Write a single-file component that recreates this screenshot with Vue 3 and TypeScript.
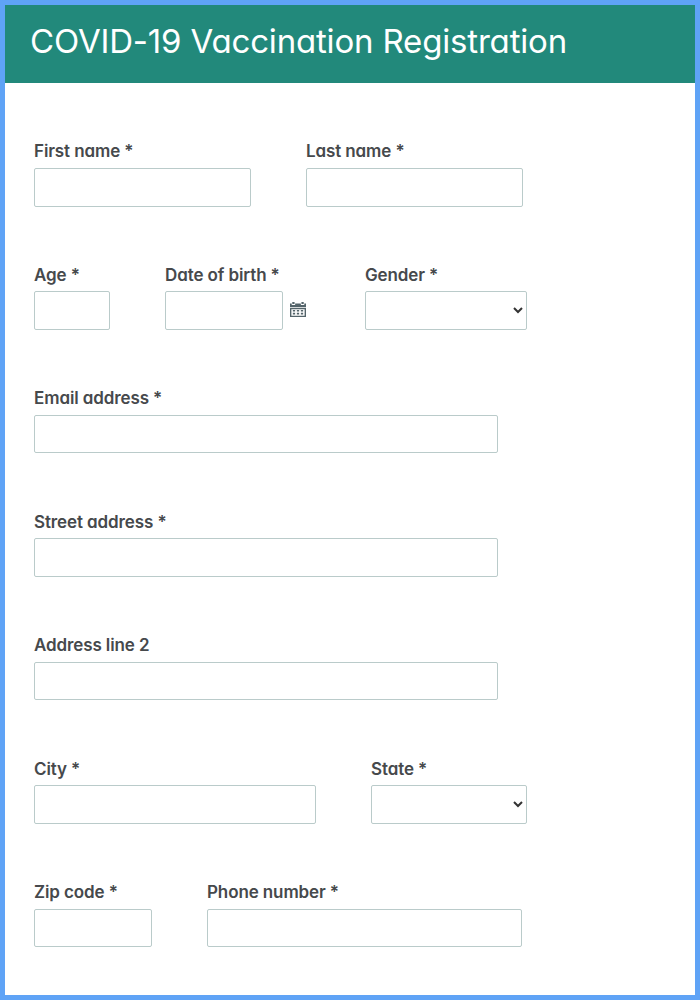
<script setup lang="ts">
interface Field {
  label: string
  width: number
  gap: number
  kind?: 'select' | 'date'
}

const rows: Field[][] = [
  [
    { label: 'First name *', width: 217, gap: 55 },
    { label: 'Last name *', width: 217, gap: 0 },
  ],
  [
    { label: 'Age *', width: 76, gap: 55 },
    { label: 'Date of birth *', width: 118, gap: 82, kind: 'date' },
    { label: 'Gender *', width: 162, gap: 0, kind: 'select' },
  ],
  [{ label: 'Email address *', width: 464, gap: 0 }],
  [{ label: 'Street address *', width: 464, gap: 0 }],
  [{ label: 'Address line 2', width: 464, gap: 0 }],
  [
    { label: 'City *', width: 282, gap: 55 },
    { label: 'State *', width: 156, gap: 0, kind: 'select' },
  ],
  [
    { label: 'Zip code *', width: 118, gap: 55 },
    { label: 'Phone number *', width: 315, gap: 0 },
  ],
]
</script>

<template>
  <div class="page">
    <header class="banner">
      <h1>COVID-19 Vaccination Registration</h1>
    </header>
    <form class="form" @submit.prevent>
      <div v-for="(row, r) in rows" :key="r" class="row">
        <div
          v-for="field in row"
          :key="field.label"
          class="field"
          :style="{ marginRight: field.gap + 'px' }"
        >
          <label>{{ field.label }}</label>
          <div class="control">
            <select v-if="field.kind === 'select'" :style="{ width: field.width + 'px' }">
              <option></option>
            </select>
            <input v-else type="text" :style="{ width: field.width + 'px' }" />
            <svg
              v-if="field.kind === 'date'"
              class="cal"
              width="16"
              height="15"
              viewBox="1 1 14 14.500"
              preserveAspectRatio="none"
              aria-hidden="true"
            >
              <path
                fill="#54646a"
                d="M3 1h2v2H3zM11 1h2v2h-2zM1 2.500h1.500V4h3V2.500h5V4h3V2.500H15V6H1zM1 6.800h14V15.500H1zM2.200 8v6.300h11.600V8z"
                fill-rule="evenodd"
              />
              <path
                fill="#54646a"
                d="M3.500 8.800h2v1.500h-2zM7 8.800h2v1.500H7zM10.500 8.800h2v1.500h-2zM3.500 11.500h2V13h-2zM7 11.500h2V13H7zM10.500 11.500h2V13h-2z"
              />
            </svg>
          </div>
        </div>
      </div>
    </form>
  </div>
</template>

<style>
html,
body {
  margin: 0;
  background: #ffffff;
}
</style>

<style scoped>
.page {
  box-sizing: border-box;
  width: 700px;
  height: 1000px;
  border: 5px solid #5fa3f6;
  background: #ffffff;
  overflow: hidden;
  font-family: Inter, Lato, sans-serif;
  font-feature-settings: 'cv11' 1;
}
.banner {
  height: 78px;
  background: #22897b;
  display: flex;
  align-items: center;
  padding: 0 0 6px 25px;
  box-sizing: border-box;
}
.banner h1 {
  margin: 0;
  color: #ffffff;
  font-size: 33px;
  font-weight: 400;
  letter-spacing: -0.17px;
  line-height: 1;
  white-space: nowrap;
}
.form {
  padding: 56.300px 0 0 29px;
}
.row {
  display: flex;
  margin-bottom: 56.204px;
}
.field {
  display: flex;
  flex-direction: column;
}
label {
  height: 24px;
  margin-bottom: 4.595px;
  line-height: 24px;
  font-size: 17px;
  font-weight: 570;
  letter-spacing: -0.11px;
  color: #46494c;
  white-space: nowrap;
}
.control {
  display: flex;
  align-items: center;
  position: relative;
}
input,
select {
  box-sizing: border-box;
  height: 38.657px;
  margin: 0;
  border: 1px solid #bacbca;
  border-radius: 2px;
  background: #ffffff;
  padding: 0 8px;
  font-family: inherit;
  font-size: 16px;
  color: #333333;
}
.cal {
  position: absolute;
  left: 100%;
  margin-left: 7px;
  top: 11px;
}
</style>
